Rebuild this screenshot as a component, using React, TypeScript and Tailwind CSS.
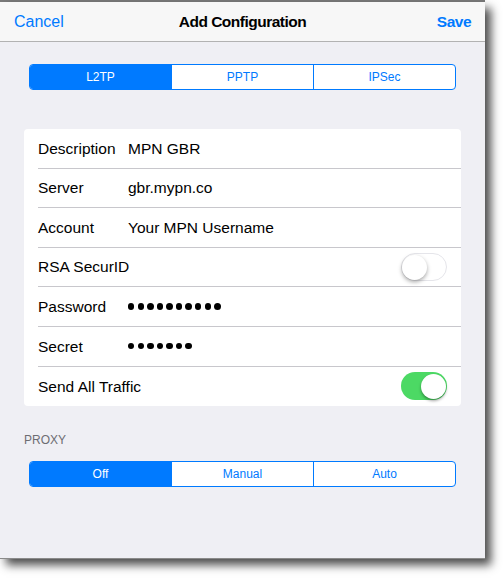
import React from "react";

const font = { fontFamily: '"Liberation Sans", Arial, sans-serif' };

type SegProps = { items: string[]; active: number };

const Segmented = ({ items, active }: SegProps) => {
  return (
    <div className="mx-[29px] flex h-[26px] rounded-[4px] border border-[#007aff] overflow-hidden bg-white">
      {items.map((item, i) => (
        <div
          key={item}
          className={
            "flex-1 flex items-center justify-center text-[12px] " +
            (i === active ? "bg-[#007aff] text-white" : "text-[#007aff]") +
            (i > 0 ? " border-l border-[#007aff]" : "")
          }
        >
          {item}
        </div>
      ))}
    </div>
  );
};

const Toggle = ({ on }: { on: boolean }) => {
  if (on) {
    return (
      <div className="w-[46px] h-[28px] rounded-full bg-[#4cd964] flex items-center justify-end p-[1.5px]">
        <div className="w-[25px] h-[25px] rounded-full bg-white shadow-[0_2px_3px_rgba(0,0,0,0.35)]" />
      </div>
    );
  }
  return (
    <div className="w-[46px] h-[28px] rounded-full bg-white border-[1.5px] border-[#e5e5ea] flex items-center">
      <div className="w-[25px] h-[25px] rounded-full bg-white shadow-[0_2px_4px_rgba(0,0,0,0.35)]" />
    </div>
  );
};

const Dots = ({ count }: { count: number }) => (
  <div className="flex gap-[3.2px]">
    {Array.from({ length: count }).map((_, i) => (
      <span key={i} className="w-[6.4px] h-[6.4px] rounded-full bg-black" />
    ))}
  </div>
);

type Row = { label: string; value?: React.ReactNode; toggle?: boolean };

const rows: Row[] = [
  { label: "Description", value: "MPN GBR" },
  { label: "Server", value: "gbr.mypn.co" },
  { label: "Account", value: "Your MPN Username" },
  { label: "RSA SecurID", toggle: false },
  { label: "Password", value: <Dots count={10} /> },
  { label: "Secret", value: <Dots count={7} /> },
  { label: "Send All Traffic", toggle: true },
];

export default function App() {
  return (
    <div className="w-[503px] h-[579px] bg-white overflow-hidden" style={font}>
      <div className="w-[485px] h-[2px] bg-[#7a7a7a]" />
      <div className="w-[485px] h-[557px] bg-[#efeff4] border-b border-[#8a8a8a] shadow-[6px_6px_9px_rgba(0,0,0,0.7)] flex flex-col">
        {/* nav bar */}
        <div className="h-[40px] shrink-0 bg-[#f7f7f7] border-b border-[#b2b2b2] flex items-center px-[14px]">
          <div className="flex-1">
            <span className="text-[16px] text-[#007aff]">Cancel</span>
          </div>
          <span className="text-[15.5px] font-bold tracking-[-0.5px] text-black">
            Add Configuration
          </span>
          <div className="flex-1 flex justify-end">
            <span className="text-[15.5px] font-bold tracking-[-0.5px] text-[#007aff]">Save</span>
          </div>
        </div>

        <div className="pt-[22px]">
          <Segmented items={["L2TP", "PPTP", "IPSec"]} active={0} />
        </div>

        {/* settings list */}
        <div className="mt-[39px] mx-[24px] bg-white rounded-[4px] pl-[14px]">
          {rows.map((row, i) => (
            <div
              key={row.label}
              className={
                "h-[39.6px] flex items-center pr-[14px] text-[15.5px] text-black whitespace-nowrap" +
                (i < rows.length - 1 ? " border-b border-[#c8c7cc]" : "")
              }
            >
              <span className="w-[90px] shrink-0">{row.label}</span>
              {row.value !== undefined && <div className="flex-1">{row.value}</div>}
              {row.toggle !== undefined && (
                <div className="ml-auto">
                  <Toggle on={row.toggle} />
                </div>
              )}
            </div>
          ))}
        </div>

        <div className="mt-[25px] px-[24px] text-[12px] text-[#6d6d72]">PROXY</div>
        <div className="pt-[12px]">
          <Segmented items={["Off", "Manual", "Auto"]} active={0} />
        </div>
      </div>
    </div>
  );
}
